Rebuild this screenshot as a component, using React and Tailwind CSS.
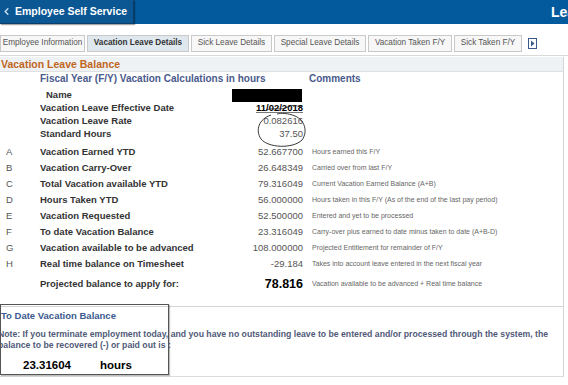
import { ChevronLeft } from "lucide-react";

const tabs = [
  { label: "Employee Information", w: "w-[85px]" },
  { label: "Vacation Leave Details", w: "w-[102px]", active: true },
  { label: "Sick Leave Details", w: "w-[81px]" },
  { label: "Special Leave Details", w: "w-[92px]" },
  { label: "Vacation Taken F/Y", w: "w-[84px]" },
  { label: "Sick Taken F/Y", w: "w-[68px]" },
];

const topRows = [
  { label: "Vacation Leave Effective Date", value: "11/02/2018", date: true },
  { label: "Vacation Leave Rate", value: "0.082616" },
  { label: "Standard Hours", value: "37.50" },
];

const rows = [
  ["A", "Vacation Earned YTD", "52.667700", "Hours earned this F/Y"],
  ["B", "Vacation Carry-Over", "26.648349", "Carried over from last F/Y"],
  ["C", "Total Vacation available YTD", "79.316049", "Current Vacation Earned Balance (A+B)"],
  ["D", "Hours Taken YTD", "56.000000", "Hours taken in this F/Y (As of the end of the last pay period)"],
  ["E", "Vacation Requested", "52.500000", "Entered and yet to be processed"],
  ["F", "To date Vacation Balance", "23.316049", "Carry-over plus earned to date minus taken to date (A+B-D)"],
  ["G", "Vacation available to be advanced", "108.000000", "Projected Entitlement for remainder of F/Y"],
  ["H", "Real time balance on Timesheet", "-29.184", "Takes into account leave entered in the next fiscal year"],
];

export default function App() {
  return (
    <div className="w-[568px] h-[385px] overflow-hidden bg-white font-['Liberation_Sans',Arial,sans-serif]">

      {/* header */}
      <div className="h-[24px] bg-[#035a9c] flex items-stretch justify-between">
        <div className="w-[134px] flex items-center gap-[3px] pl-[1px] bg-[#0a5794] border-r border-b border-[#0a3f6c] shadow-[1px_1px_1px_rgba(0,0,0,0.35)]">
          <ChevronLeft size={11} strokeWidth={3} className="text-[#cfe0ee] shrink-0" />
          <span className="text-white font-bold text-[10.5px] whitespace-nowrap">Employee Self Service</span>
        </div>
        <div className="text-white font-bold text-[14px] leading-[24px] whitespace-nowrap mr-[-7px]">Lea</div>
      </div>

      {/* tabs */}
      <div className="h-[32px] flex items-end gap-[2px] border-b border-[#d9d9d9]">
        {tabs.map((t) => (
          <div
            key={t.label}
            className={`${t.w} h-[17px] mb-[3px] flex items-center justify-center whitespace-nowrap text-[8.2px] border border-[#c9c9c9] ${
              t.active ? "bg-[#dfe7ef] text-[#333] font-bold" : "bg-[#f7f7f7] text-[#555]"
            }`}
          >
            {t.label}
          </div>
        ))}
        <div className="h-[17px] mb-[3px] ml-[4px] flex items-center">
          <svg width="9" height="11" viewBox="0 0 9 11">
            <rect x="0.5" y="0.5" width="8" height="10" fill="#fff" stroke="#3a5a8a" />
            <path d="M3 2.5 L6.5 5.5 L3 8.5 Z" fill="#3a5a8a" />
          </svg>
        </div>
      </div>

      <div className="w-[564px] border-r border-[#d5d5d5]">
        {/* section header */}
        <div className="h-[15px] mt-[1px] bg-[#eef2f4] border-b border-[#e0e0e0] pl-[1px] text-[10.5px] font-bold text-[#c0661e] leading-[15px]">
          Vacation Leave Balance
        </div>

        <div className="relative">
          <div className="flex h-[14px] items-end text-[10px] font-bold text-[#4a5a8c]">
            <div className="w-[309px] pl-[40px]">Fiscal Year (F/Y) Vacation Calculations in hours</div>
            <div>Comments</div>
          </div>

          <div className="flex h-[14px] items-center mt-[2px] text-[9.5px] font-bold text-[#333]">
            <div className="w-[232px] pl-[46px]">Name</div>
            <div className="w-[70px] h-[13px] bg-black"></div>
          </div>

          {topRows.map((r) => (
            <div key={r.label} className="flex h-[13px] items-center text-[9.5px]">
              <div className="w-[230px] pl-[40px] font-bold text-[#333]">{r.label}</div>
              <div
                className={`w-[73px] text-right ${
                  r.date ? "font-bold text-black underline decoration-[#777]" : "text-[#555]"
                }`}
              >
                {r.value}
              </div>
            </div>
          ))}

          <div className="mt-[3px]">
            {rows.map(([k, label, value, note]) => (
              <div key={k} className="flex h-[16px] items-center">
                <div className="w-[40px] pl-[6px] text-[9.5px] text-[#555]">{k}</div>
                <div className="w-[190px] text-[9.5px] font-bold text-[#333]">{label}</div>
                <div className="w-[73px] text-right text-[9.5px] text-[#555]">{value}</div>
                <div className="pl-[9px] text-[7px] text-[#666]">{note}</div>
              </div>
            ))}
          </div>

          <div className="flex h-[20px] items-center mt-[2px]">
            <div className="w-[230px] pl-[40px] text-[9.5px] font-bold text-[#333]">Projected balance to apply for:</div>
            <div className="w-[73px] text-right text-[12.5px] font-bold text-black">78.816</div>
            <div className="pl-[9px] text-[7px] text-[#666]">Vacation available to be advanced + Real time balance</div>
          </div>

          {/* hand-drawn annotation over the rate */}
          <svg className="absolute left-[255px] top-[40px]" width="52" height="37" viewBox="0 0 52 37">
            <path d="M16 3 C4 7, 0 18, 6 27 C13 36, 38 37, 47 28 C53 20, 50 8, 40 4 C33 1, 26 1, 22 2" fill="none" stroke="#222" strokeWidth="0.9" />
          </svg>
          <svg className="absolute left-[258px] top-[32px]" width="46" height="8" viewBox="0 0 46 8">
            <path d="M8 6 C15 3, 22 7, 30 3 S40 4, 44 2" fill="none" stroke="#222" strokeWidth="0.8" />
          </svg>
        </div>

        {/* to date box */}
        <div className="mt-[12px] border-t border-[#d5d5d5] relative h-[69px]">
          <div className="absolute left-0 top-[-3px] w-[169px] h-[71px] border border-[#555] shadow-[1px_1px_1px_rgba(0,0,0,0.25)]"></div>
          <div className="relative pl-[1px] pt-[3px] text-[9.5px] font-bold text-[#3a5a8e] leading-[12px]">
            To Date Vacation Balance
          </div>
          <div className="relative mt-[7px] text-[8.7px] font-bold text-[#505a78] leading-[11px] w-[560px] -ml-[2px]">
            Note: If you terminate employment today, and you have no outstanding leave to be entered and/or processed through the system, the balance to be recovered (-) or paid out is :
          </div>
          <div className="relative flex items-center mt-[6px] text-[11.5px] font-bold text-black">
            <div className="w-[100px] pl-[23px]">23.31604</div>
            <div>hours</div>
          </div>
        </div>
        <div className="border-t border-[#dcdcdc] mt-[1px]"></div>
      </div>
    </div>
  );
}
